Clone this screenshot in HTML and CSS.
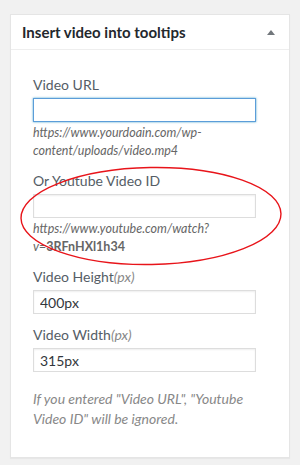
FILE: index.html
```html
<!DOCTYPE html>
<html lang="en">
<head>
    <meta charset="UTF-8">
    <meta name="viewport" content="width=device-width, initial-scale=1.0">
    <title>Insert video into tooltips</title>
    <link rel="stylesheet" href="styles.css">
</head>
<body>

    <div class="postbox">
        <div class="postbox-header">
            <h2>Insert video into tooltips</h2>
            <span class="toggle-arrow"></span>
        </div>
        <div class="inside">
            <div class="field">
                <label for="video_url">Video URL</label>
                <input type="text" id="video_url" class="focused">
                <p class="hint">https://www.yourdoain.com/wp-content/uploads/video.mp4</p>
            </div>
            <div class="field">
                <label for="youtube_id">Or Youtube Video ID</label>
                <input type="text" id="youtube_id">
                <p class="hint">https://www.youtube.com/watch?v=<b>3RFnHXl1h34</b></p>
            </div>
            <div class="field">
                <label for="video_height">Video Height<em>(px)</em></label>
                <input type="text" id="video_height" value="400px">
            </div>
            <div class="field">
                <label for="video_width">Video Width<em>(px)</em></label>
                <input type="text" id="video_width" value="315px">
            </div>
            <p class="note">If you entered "Video URL", "Youtube Video ID" will be ignored.</p>
        </div>

        <!-- hand drawn highlight round the youtube field -->
        <svg class="highlight" width="270" height="112" viewBox="0 0 270 112">
            <ellipse cx="135" cy="55" rx="130" ry="48.5" fill="none" stroke="#e8141a" stroke-width="1.4" transform="rotate(-1 135 55)"/>
        </svg>
    </div>

</body>
</html>
```

FILE: styles.css
```css
body {
    margin: 0;
    padding: 14px 10px 10px;
    background-color: #f1f1f1;
    font-family: Lato, "Open Sans", sans-serif;
    color: #555d66;
}
.postbox {
    position: relative;
    background-color: #fff;
    border: 1px solid #e5e5e5;
    box-shadow: 0 1px 1px rgba(0, 0, 0, 0.04);
}
.postbox-header {
    display: flex;
    align-items: center;
    justify-content: space-between;
    height: 34px;
    padding: 0 14px 0 11px;
    border-bottom: 1px solid #eee;
}
.postbox-header h2 {
    margin: 0;
    font-size: 15px;
    font-weight: bold;
    color: #23282d;
}
.toggle-arrow {
    width: 0;
    height: 0;
    border-left: 4px solid transparent;
    border-right: 4px solid transparent;
    border-bottom: 5px solid #72777c;
}
.inside {
    padding: 26px 22px 28px;
}
.field {
    margin-bottom: 12px;
}
.field label {
    display: block;
    font-size: 14px;
    line-height: 18px;
    margin-bottom: 4px;
}
.field label em {
    color: #888;
}
.field input {
    display: block;
    box-sizing: border-box;
    width: 223px;
    height: 24px;
    margin: 0;
    padding: 2px 6px;
    border: 1px solid #ddd;
    box-shadow: inset 0 1px 2px rgba(0, 0, 0, 0.07);
    font-family: inherit;
    font-size: 14px;
    color: #32373c;
    outline: none;
}
.field input.focused {
    border-color: #5b9dd9;
    box-shadow: 0 0 2px rgba(30, 140, 190, 0.8);
}
.hint {
    margin: 2px 0 0;
    font-size: 12.5px;
    line-height: 18px;
    font-style: italic;
    color: #666;
    width: 205px;
}
.hint b {
    font-style: normal;
}
.note {
    margin: 17px 0 0;
    font-size: 14px;
    line-height: 20px;
    font-style: italic;
    color: #888;
}
.highlight {
    position: absolute;
    left: 5px;
    top: 146px;
}
```
